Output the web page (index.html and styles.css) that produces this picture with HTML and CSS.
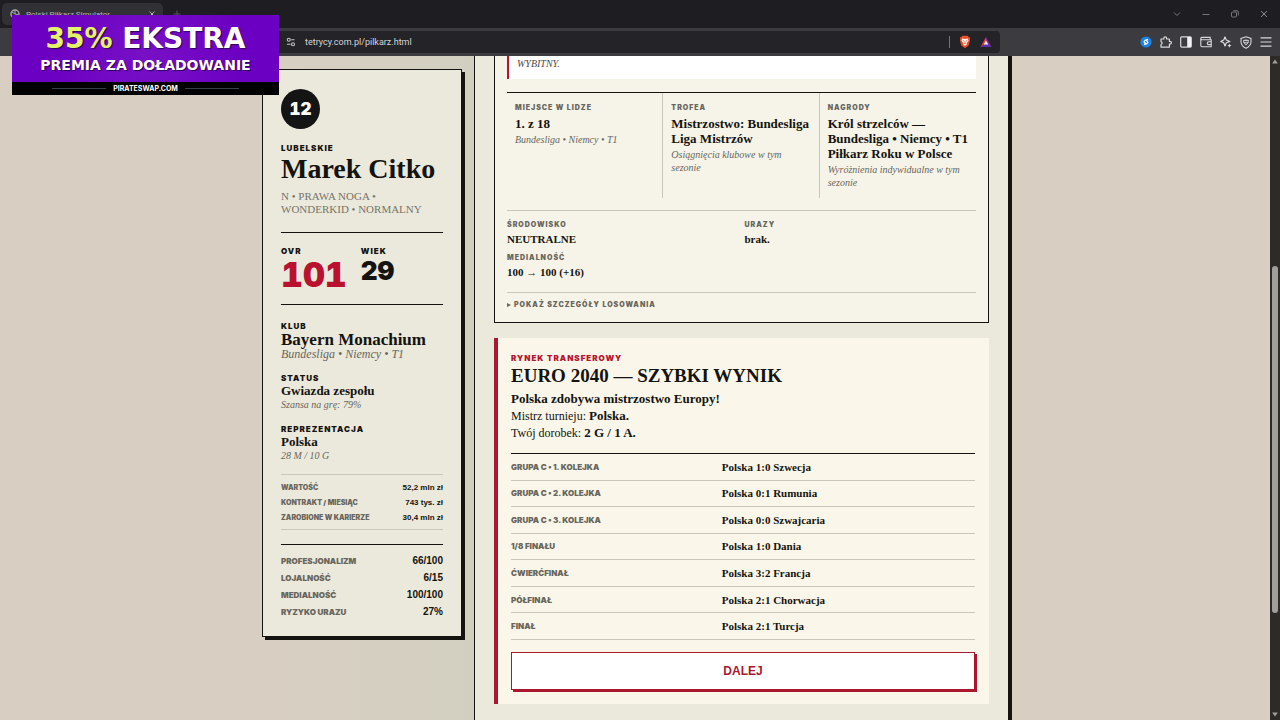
FILE: index.html
```html
<!DOCTYPE html>
<html lang="pl">
<head>
    <meta charset="UTF-8">
    <meta name="viewport" content="width=device-width, initial-scale=1.0">
    <title>Polski Piłkarz Simulator</title>
    <link rel="stylesheet" href="styles.css">
</head>
<body>
    <header class="browser">
        <div class="tab-strip">
            <div class="tab">
                <svg width="10" height="10" viewBox="0 0 10 10"><circle cx="5" cy="5" r="4" fill="none" stroke="#a9a8ad" stroke-width="1.4"/><path d="M5 1 L5 5 L8.5 6 M2 3 L5 5" fill="none" stroke="#a9a8ad"/></svg>
                <span class="tab-title">Polski Piłkarz Simulator</span>
                <button class="icon-btn" aria-label="Zamknij kartę"><svg width="8" height="8" viewBox="0 0 8 8"><path d="M1.5 1.5 L6.5 6.5 M6.5 1.5 L1.5 6.5" stroke="#b5b4b9"/></svg></button>
            </div>
            <button class="icon-btn" aria-label="Nowa karta"><svg width="8" height="8" viewBox="0 0 8 8"><path d="M4 0.5 V7.5 M0.5 4 H7.5" stroke="#57565b"/></svg></button>
            <div class="window-buttons">
                <button class="icon-btn" aria-label="Karty"><svg width="8" height="8" viewBox="0 0 8 8"><path d="M1 2.5 L4 5.5 L7 2.5" fill="none" stroke="#77767b"/></svg></button>
                <button class="icon-btn" aria-label="Minimalizuj"><svg width="8" height="8" viewBox="0 0 8 8"><path d="M0.5 4.5 H7.5" stroke="#77767b"/></svg></button>
                <button class="icon-btn" aria-label="Przywróć"><svg width="8" height="8" viewBox="0 0 8 8"><rect x="0.5" y="2" width="5" height="5" rx="1" fill="none" stroke="#77767b"/><path d="M2.5 0.7 H6 Q7.3 0.7 7.3 2 V5.5" fill="none" stroke="#77767b"/></svg></button>
                <button class="icon-btn" aria-label="Zamknij"><svg width="8" height="8" viewBox="0 0 8 8"><path d="M1 1 L7 7 M7 1 L1 7" stroke="#88878c"/></svg></button>
            </div>
        </div>
        <div class="toolbar">
            <div class="address-bar">
                <svg width="10" height="10" viewBox="0 0 10 10" fill="none" stroke="#c5c4c9" stroke-width="1.1"><circle cx="2.8" cy="2.8" r="1.5"/><path d="M5.2 2.8 H8.5 M1 7.2 H4.6"/><circle cx="7" cy="7.2" r="1.5"/></svg>
                <input class="address" type="text" value="tetrycy.com.pl/pilkarz.html" aria-label="Adres strony">
                <span class="address-divider"></span>
                <svg width="12" height="14" viewBox="0 0 12 14"><path d="M3.5 0.8 H8.5 L10 2.2 L11.2 2.4 L10.8 4.8 L11 5.5 L9.6 10.4 L6 13.3 L2.4 10.4 L1 5.5 L1.2 4.8 L0.8 2.4 L2 2.2 Z" fill="#e8502a"/><path d="M3.3 3.4 L6 3.9 L8.7 3.4 L9.6 5.4 L8 7.8 L7.4 8 L8 9.3 L6 10.8 L4 9.3 L4.6 8 L4 7.8 L2.4 5.4 Z" fill="#fff3ee"/><path d="M4 5.6 L5.3 6.1 M8 5.6 L6.7 6.1 M6 6.2 V7.8 M5 8.7 L6 8.2 L7 8.7" fill="none" stroke="#e8502a" stroke-width="0.7"/></svg>
                <svg width="12" height="12" viewBox="0 0 12 12"><path d="M6 1 L0.5 11 H4 L6 7.2 Z" fill="#e2412f"/><path d="M6 1 L11.5 11 H8 L6 7.2 Z" fill="#8a2a92"/><path d="M0.5 11 L3.4 8.4 H8.6 L11.5 11 Z" fill="#5a2fb0"/><path d="M6 4.6 L8.2 8.6 H3.8 Z" fill="#fff"/></svg>
            </div>
            <div class="extensions">
                <button class="icon-btn" aria-label="Shazam"><svg width="12" height="12" viewBox="0 0 12 12"><circle cx="6" cy="6" r="5.6" fill="#1b83e6"/><path d="M7.6 3.6 L5 4.4 Q3.4 5.5 4.8 6.9 L6.2 7.6 M4.4 8.4 L7 7.6 Q8.6 6.5 7.2 5.1 L5.8 4.4" fill="none" stroke="#fff" stroke-width="1.2" stroke-linecap="round"/></svg></button>
                <button class="icon-btn" aria-label="Rozszerzenia"><svg width="12" height="12" viewBox="0 0 12 12"><path d="M1 3 H3.8 V2.2 A1.4 1.4 0 0 1 6.6 2.2 V3 H9.4 V5.4 H10 A1.4 1.4 0 0 1 10 8.2 H9.4 V11.2 H1 V8.5 A1.5 1.5 0 0 0 1 5.6 Z" fill="none" stroke="#d8d7db" stroke-width="1.2" stroke-linejoin="round"/></svg></button>
                <button class="icon-btn" aria-label="Panel boczny"><svg width="12" height="12" viewBox="0 0 12 12"><rect x="0.7" y="0.9" width="10.6" height="10.2" rx="1" fill="none" stroke="#d8d7db" stroke-width="1.2"/><path d="M7.2 1 H11 V11 H7.2 Z" fill="#f1f0f3"/></svg></button>
                <button class="icon-btn" aria-label="Portfel"><svg width="12" height="12" viewBox="0 0 12 12" fill="none" stroke="#d8d7db" stroke-width="1.1"><path d="M10.2 3.6 V1.4 H2 Q0.8 1.4 0.8 2.6 V9.6 Q0.8 10.7 2 10.7 H11.2 V3.7 H2 Q0.8 3.6 0.8 2.5"/><path d="M11.2 5.8 H8 Q6.6 7.2 8 8.6 H11.2"/></svg></button>
                <button class="icon-btn" aria-label="Leo"><svg width="12" height="12" viewBox="0 0 12 12"><path d="M5 0.9 L6.3 4 L9.9 5.4 L6.3 6.7 L5 10 L3.7 6.7 L0.7 5.4 L3.7 4 Z" fill="none" stroke="#e2e1e5" stroke-width="1.1" stroke-linejoin="round"/><path d="M9.4 7.4 L10 9 L11.6 9.6 L10 10.2 L9.4 11.8 L8.8 10.2 L7.2 9.6 L8.8 9 Z" fill="#e2e1e5"/></svg></button>
                <button class="icon-btn" aria-label="VPN"><svg width="12" height="13" viewBox="0 0 12 13"><path d="M6 0.8 L11 2.4 V6 Q10.8 10 6 12.3 Q1.2 10 1 6 V2.4 Z" fill="none" stroke="#d8d7db" stroke-width="1.1"/><path d="M3 4.2 Q6 2.6 9 4.2 L8.6 6.8 L6 9.4 L3.4 6.8 Z" fill="#c8c7cc"/><path d="M4 5.5 H8 M5 7.2 H7" stroke="#3c3b40" stroke-width="0.8"/></svg></button>
                <button class="icon-btn" aria-label="Menu"><svg width="12" height="12" viewBox="0 0 12 12"><path d="M0.5 1.8 H11.5 M0.5 6 H11.5 M0.5 10.2 H11.5" stroke="#d8d7db" stroke-width="1.2"/></svg></button>
            </div>
        </div>
    </header>

    <div class="viewport">
        <div class="page">
            <div class="layout">
                <aside class="player-card">
                    <div class="badge">12</div>
                    <div class="label player-region">Lubelskie</div>
                    <h1 class="player-name">Marek Citko</h1>
                    <p class="player-meta">N • PRAWA NOGA •<br>WONDERKID • NORMALNY</p>

                    <div class="ratings">
                        <div>
                            <div class="label">OVR</div>
                            <div class="ovr">101</div>
                        </div>
                        <div>
                            <div class="label">Wiek</div>
                            <div class="age">29</div>
                        </div>
                    </div>

                    <div class="info">
                        <div class="label">Klub</div>
                        <div class="club">Bayern Monachium</div>
                        <div class="club-league">Bundesliga • Niemcy • T1</div>
                    </div>
                    <div class="info">
                        <div class="label">Status</div>
                        <div class="info-value">Gwiazda zespołu</div>
                        <div class="info-note">Szansa na grę: 79%</div>
                    </div>
                    <div class="info">
                        <div class="label">Reprezentacja</div>
                        <div class="info-value">Polska</div>
                        <div class="info-note">28 M / 10 G</div>
                    </div>

                    <dl class="money">
                        <div class="row"><dt>Wartość</dt><dd>52,2 mln zł</dd></div>
                        <div class="row"><dt>Kontrakt / miesiąc</dt><dd>743 tys. zł</dd></div>
                        <div class="row"><dt>Zarobione w karierze</dt><dd>30,4 mln zł</dd></div>
                    </dl>

                    <dl class="traits">
                        <div class="row"><dt>Profesjonalizm</dt><dd>66/100</dd></div>
                        <div class="row"><dt>Lojalność</dt><dd>6/15</dd></div>
                        <div class="row"><dt>Medialność</dt><dd>100/100</dd></div>
                        <div class="row"><dt>Ryzyko urazu</dt><dd>27%</dd></div>
                    </dl>
                </aside>

                <main class="sheet">
                    <section class="season">
                        <blockquote class="quote">WYBITNY.</blockquote>

                        <div class="honours">
                            <div class="honour">
                                <div class="small-label">Miejsce w lidze</div>
                                <div class="honour-value">1. z 18</div>
                                <div class="honour-note">Bundesliga • Niemcy • T1</div>
                            </div>
                            <div class="honour">
                                <div class="small-label">Trofea</div>
                                <div class="honour-value">Mistrzostwo: Bundesliga<br>Liga Mistrzów</div>
                                <div class="honour-note">Osiągnięcia klubowe w tym sezonie</div>
                            </div>
                            <div class="honour">
                                <div class="small-label">Nagrody</div>
                                <div class="honour-value">Król strzelców —<br>Bundesliga • Niemcy • T1<br>Piłkarz Roku w Polsce</div>
                                <div class="honour-note">Wyróżnienia indywidualne w tym sezonie</div>
                            </div>
                        </div>

                        <div class="facts">
                            <div>
                                <div class="small-label">Środowisko</div>
                                <div class="fact-value">NEUTRALNE</div>
                            </div>
                            <div>
                                <div class="small-label">Urazy</div>
                                <div class="fact-value">brak.</div>
                            </div>
                            <div>
                                <div class="small-label">Medialność</div>
                                <div class="fact-value">100 → 100 (+16)</div>
                            </div>
                        </div>

                        <details class="draw">
                            <summary class="small-label">Pokaż szczegóły losowania</summary>
                        </details>
                    </section>

                    <section class="event">
                        <div class="label event-label">Rynek transferowy</div>
                        <h2 class="event-title">EURO 2040 — SZYBKI WYNIK</h2>
                        <p class="event-text">
                            <strong>Polska zdobywa mistrzostwo Europy!</strong><br>
                            Mistrz turnieju: <strong>Polska.</strong><br>
                            Twój dorobek: <strong>2 G / 1 A.</strong>
                        </p>

                        <table class="matches">
                            <tbody>
                                <tr><th scope="row">Grupa C • 1. kolejka</th><td>Polska 1:0 Szwecja</td></tr>
                                <tr><th scope="row">Grupa C • 2. kolejka</th><td>Polska 0:1 Rumunia</td></tr>
                                <tr><th scope="row">Grupa C • 3. kolejka</th><td>Polska 0:0 Szwajcaria</td></tr>
                                <tr><th scope="row">1/8 finału</th><td>Polska 1:0 Dania</td></tr>
                                <tr><th scope="row">Ćwierćfinał</th><td>Polska 3:2 Francja</td></tr>
                                <tr><th scope="row">Półfinał</th><td>Polska 2:1 Chorwacja</td></tr>
                                <tr><th scope="row">Finał</th><td>Polska 2:1 Turcja</td></tr>
                            </tbody>
                        </table>

                        <button class="next-btn">DALEJ</button>
                    </section>
                </main>
            </div>
        </div>
        <div class="scrollbar">
            <svg width="6" height="5" viewBox="0 0 6 5"><path d="M3 0.5 L5.8 4.5 H0.2 Z" fill="#a09f9b"/></svg>
            <div class="track"><div class="thumb"></div></div>
            <svg width="6" height="5" viewBox="0 0 6 5"><path d="M3 4.5 L5.8 0.5 H0.2 Z" fill="#a09f9b"/></svg>
        </div>
    </div>

    <a class="promo" href="#">
        <span class="promo-body">
            <span class="promo-title"><span class="promo-accent">35%</span> EKSTRA</span>
            <span class="promo-sub">PREMIA ZA DOŁADOWANIE</span>
        </span>
        <span class="promo-footer">PIRATESWAP.COM</span>
    </a>
</body>
</html>
```
FILE: styles.css
```css
* {
    box-sizing: border-box;
}
body {
    margin: 0;
    height: 100vh;
    display: flex;
    flex-direction: column;
    overflow: hidden;
    font-family: Georgia, "Liberation Serif", serif;
    color: #14130f;
}
h1, h2, p, dl, dd, blockquote {
    margin: 0;
}

/* browser bars */
.browser {
    flex: none;
    font-family: Roboto, sans-serif;
}
.icon-btn {
    display: flex;
    padding: 0;
    border: none;
    background: none;
}
.tab-strip {
    height: 28px;
    display: flex;
    align-items: center;
    gap: 10px;
    padding-left: 2px;
    background: #1e1d22;
}
.tab {
    width: 161px;
    height: 22px;
    display: flex;
    align-items: center;
    gap: 6px;
    padding: 0 7px 0 8px;
    border-radius: 5px;
    background: #313035;
}
.tab-title {
    flex: 1;
    font-size: 8px;
    color: #b5b4b9;
}
.window-buttons {
    display: flex;
    gap: 21px;
    margin-left: auto;
    padding-right: 12px;
}
.toolbar {
    height: 28px;
    display: flex;
    align-items: center;
    padding: 0 8px 0 20px;
    background: #3c3b40;
}
.address-bar {
    flex: 1;
    height: 22px;
    display: flex;
    align-items: center;
    gap: 9px;
    padding: 0 8px 0 266px;
    border-radius: 4px;
    background: #242328;
}
.address {
    flex: 1;
    padding: 0;
    border: none;
    background: none;
    font-family: Roboto, sans-serif;
    font-size: 9px;
    color: #d6d5da;
}
.address-divider {
    width: 1px;
    height: 12px;
    background: #77767b;
}
.extensions {
    display: flex;
    align-items: center;
    gap: 8px;
    margin-left: 140px;
}

/* page */
.viewport {
    flex: 1;
    min-height: 0;
    display: flex;
}
.page {
    flex: 1;
    overflow: hidden;
    background: #d8cfc2;
}
.layout {
    max-width: 746px;
    min-height: 100%;
    margin: 0 auto;
    display: flex;
    align-items: flex-start;
    gap: 12px;
    background: linear-gradient(90deg, #d8cfc2, #d2cfc1 212px);
}
.scrollbar {
    width: 10px;
    display: flex;
    flex-direction: column;
    align-items: center;
    padding: 3px 0;
    background: #2c2b28;
}
.track {
    flex: 1;
    padding-top: 202px;
}
.thumb {
    width: 6px;
    height: 347px;
    border-radius: 3px;
    background: #a09f9b;
}

.label, .small-label, dt, .matches th {
    font-family: "Arial Black", Inter, sans-serif;
    font-weight: 900;
    text-transform: uppercase;
    line-height: 12px;
}
.label {
    font-size: 8px;
    letter-spacing: 1px;
}
.small-label {
    font-size: 7px;
    letter-spacing: 1px;
    color: #69665d;
}

/* player card */
.player-card {
    flex: 0 0 200px;
    margin-top: 13px;
    padding: 19px 18px 16px;
    border: 1px solid #14130f;
    background: #ebe9dc;
    box-shadow: 3px 3px 0 #14130f;
}
.badge {
    width: 39px;
    height: 40px;
    border-radius: 50%;
    background: #141414;
    color: #fff;
    font: 900 17px/40px Inter, sans-serif;
    font-variant-numeric: tabular-nums;
    text-align: center;
}
.player-region {
    margin-top: 13px;
}
.player-name {
    font-size: 28px;
    line-height: 30px;
    white-space: nowrap;
}
.player-meta {
    margin-top: 6px;
    font-size: 11px;
    line-height: 13px;
    color: #77746a;
}
.ratings {
    display: flex;
    gap: 14px;
    margin-top: 16px;
    padding: 12px 0 11px;
    border-top: 1px solid #14130f;
    border-bottom: 1px solid #14130f;
}
.ovr, .age {
    font-family: Inter, sans-serif;
    font-weight: 900;
    font-variant-numeric: tabular-nums;
}
.ovr {
    font-size: 34px;
    line-height: 36px;
    color: #b8122f;
}
.age {
    font-size: 26px;
    line-height: 28px;
}
.info {
    margin-top: 11px;
}
.ratings + .info {
    margin-top: 15px;
}
.club {
    font-size: 17px;
    line-height: 16px;
    font-weight: bold;
    white-space: nowrap;
}
.club-league {
    font-size: 12px;
    line-height: 13px;
    font-style: italic;
    color: #69665d;
}
.info-value {
    font-size: 13px;
    line-height: 13px;
    font-weight: bold;
}
.info-note {
    margin-top: 1px;
    font-size: 10px;
    line-height: 14px;
    font-style: italic;
    color: #69665d;
}
.row {
    display: flex;
    justify-content: space-between;
    align-items: center;
}
.row dt {
    color: #69665d;
}
.row dd {
    font-family: "Liberation Sans", sans-serif;
    font-weight: bold;
}
.money {
    margin-top: 11px;
    padding: 5px 0 4px;
    border-top: 1px solid #c9c6ba;
    border-bottom: 1px solid #c9c6ba;
}
.money .row {
    height: 15px;
}
.money dt {
    font-size: 7px;
}
.money dd {
    font-size: 8px;
}
.traits {
    margin-top: 14px;
    padding-top: 7px;
    border-top: 1px solid #14130f;
}
.traits .row {
    height: 17px;
}
.traits dt {
    font-size: 8px;
}
.traits dd {
    font-size: 10px;
}

/* main sheet */
.sheet {
    flex: 1;
    align-self: stretch;
    padding: 0 19px 16px 19px;
    border-left: 1px solid #14130f;
    background: #ebe9dc;
    box-shadow: 4px 0 0 #14130f;
}
.season {
    padding: 0 12px 11px;
    border: 1px solid #14130f;
    border-top: none;
    background: #f6f4e8;
}
.quote {
    padding: 0 8px 7px;
    border-left: 2px solid #b8122f;
    background: #fff;
    font-size: 10px;
    line-height: 16px;
    font-style: italic;
    color: #4d4a43;
}
.honours {
    display: grid;
    grid-template-columns: repeat(3, 1fr);
    margin-top: 13px;
    border-top: 1px solid #14130f;
}
.honour {
    padding: 9px 8px;
    border-right: 1px solid #c9c6ba;
}
.honour:last-child {
    border-right: none;
}
.honour-value {
    margin-top: 2px;
    font-size: 13px;
    line-height: 15px;
    font-weight: bold;
    white-space: nowrap;
}
.honour-note {
    margin-top: 2px;
    font-size: 10px;
    line-height: 13px;
    font-style: italic;
    color: #69665d;
}
.facts {
    display: grid;
    grid-template-columns: 1fr 1fr;
    gap: 6px;
    margin-top: 12px;
    padding: 8px 0 13px;
    border-top: 1px solid #c9c6ba;
    border-bottom: 1px solid #c9c6ba;
}
.fact-value {
    margin-top: 1px;
    font-size: 11px;
    line-height: 14px;
    font-weight: bold;
}
.draw {
    padding-top: 6px;
}
.draw summary {
    display: flex;
    align-items: center;
    gap: 3px;
}
.draw summary::before {
    content: "";
    border: 2px solid transparent;
    border-left: 4px solid #69665d;
    border-right: none;
}

/* event card */
.event {
    margin-top: 15px;
    padding: 14px 14px 14px 13px;
    border-left: 4px solid #a9182f;
    background: #faf7ea;
}
.event-label {
    color: #b8122f;
}
.event-title {
    font-size: 19px;
    line-height: 24px;
}
.event-text {
    margin-top: 3px;
    font-size: 12px;
    line-height: 17px;
}
.event-text strong {
    font-size: 13px;
    line-height: 16px;
}
.matches {
    width: 100%;
    height: 187px;
    margin-top: 11px;
    border-collapse: collapse;
    border-top: 1px solid #14130f;
}
.matches th, .matches td {
    padding: 0;
    border-bottom: 1px solid #c9c6ba;
    text-align: left;
}
.matches th {
    width: 45%;
    font-size: 8px;
    color: #69665d;
}
.matches td {
    padding-left: 2px;
    font-size: 11px;
    font-weight: bold;
}
.next-btn {
    display: block;
    width: 100%;
    height: 38px;
    margin-top: 12px;
    border: 1px solid #a9182f;
    background: #fff;
    box-shadow: 2px 2px 0 #a9182f;
    font: bold 12px "Liberation Sans", sans-serif;
    color: #a9182f;
}

/* promo banner over the window */
.promo {
    position: absolute;
    top: 15px;
    left: 12px;
    width: 267px;
    height: 80px;
    display: flex;
    flex-direction: column;
    text-align: center;
    text-decoration: none;
    color: #fff;
    background: #000;
}
.promo-body {
    flex: 1;
    display: flex;
    flex-direction: column;
    justify-content: center;
    padding-top: 4px;
    background: radial-gradient(circle at 50% 60%, #7810c6, #6c00c2 70%);
    font-family: "DejaVu Sans", sans-serif;
    font-weight: bold;
    text-shadow: 1px 1px 1px #2b0057;
}
.promo-title {
    font-size: 28px;
    line-height: 28px;
}
.promo-accent {
    color: #e2f36a;
}
.promo-sub {
    font-size: 14px;
    line-height: 24px;
}
.promo-footer {
    display: flex;
    align-items: center;
    justify-content: center;
    gap: 7px;
    font: bold 7px/13px Inter, sans-serif;
}
.promo-footer::before, .promo-footer::after {
    content: "";
    width: 54px;
    height: 1px;
    background: #33414d;
}
```
